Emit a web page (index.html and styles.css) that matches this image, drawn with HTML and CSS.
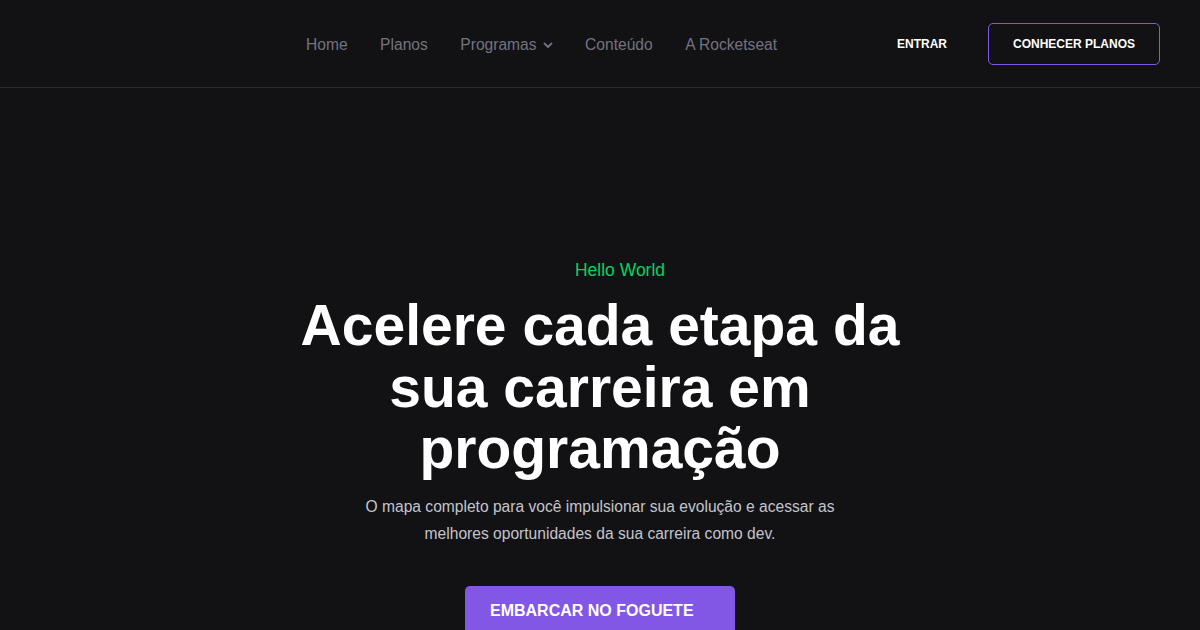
FILE: index.html
```html
<!DOCTYPE html>
<html lang="pt-BR">
<head>
<meta charset="utf-8">
<title>Rocketseat</title>
<link rel="stylesheet" href="styles.css">
</head>
<body>
<header class="header">
  <div class="header-inner">
    <div class="logo"></div>
    <nav class="nav">
      <a href="#">Home</a>
      <a href="#">Planos</a>
      <a href="#" class="dropdown">Programas
        <svg width="10" height="10" viewBox="0 0 10 10"><path d="M1.5 3.5 L5 7 L8.5 3.5" fill="none" stroke="currentColor" stroke-width="1.8" stroke-linecap="round" stroke-linejoin="round"/></svg>
      </a>
      <a href="#">Conteúdo</a>
      <a href="#">A Rocketseat</a>
    </nav>
    <div class="actions">
      <a href="#" class="enter">ENTRAR</a>
      <a href="#" class="btn-outline">CONHECER PLANOS</a>
    </div>
  </div>
</header>
<main class="hero">
  <span class="tag">Hello World</span>
  <h1 class="title">Acelere cada etapa da sua carreira em programação</h1>
  <p class="lead">O mapa completo para você impulsionar sua evolução e acessar as melhores oportunidades da sua carreira como dev.</p>
  <a href="#" class="btn-primary">EMBARCAR NO FOGUETE</a>
</main>
</body>
</html>
```
FILE: styles.css
```css
* { box-sizing: border-box; }
html, body { margin: 0; padding: 0; }
body {
  background: #121214;
  font-family: "Liberation Sans", Arial, sans-serif;
  color: #e1e1e6;
  overflow: hidden;
}
a { text-decoration: none; color: inherit; }
.header {
  border-bottom: 1px solid #29292e;
  height: 88px;
}
.header-inner {
  width: 1120px;
  margin: 0 auto;
  height: 87px;
  display: flex;
  align-items: center;
}
.logo { width: 266px; }
.nav {
  display: flex;
  align-items: center;
  gap: 32.5px;
  margin-top: 2px;
  font-size: 15.6px;
  color: #737380;
}
.dropdown { display: flex; align-items: center; gap: 6px; }
.dropdown svg { margin-top: 1px; }
.actions {
  margin-left: auto;
  display: flex;
  align-items: center;
  gap: 41px;
  font-size: 12px;
  font-weight: 700;
  color: #ffffff;
}
.enter { margin-top: 1px; }
.btn-outline {
  display: flex;
  align-items: center;
  height: 42px;
  padding: 0 24px;
  border: 1px solid #8257e5;
  border-radius: 5px;
}
.hero {
  display: flex;
  flex-direction: column;
  align-items: center;
  text-align: center;
  padding-top: 170px;
}
.tag {
  padding-left: 40px;
  color: #04d361;
  font-size: 17.5px;
  line-height: 24px;
}
.title {
  margin: 13px 0 0;
  width: 640px;
  font-size: 57px;
  line-height: 61.5px;
  font-weight: 700;
  color: #ffffff;
}
.lead {
  margin: 13px 0 0;
  width: 500px;
  font-size: 15.6px;
  line-height: 27px;
  color: #c4c4cc;
}
.btn-primary {
  margin-top: 39px;
  display: flex;
  align-items: center;
  width: 270px;
  height: 50px;
  padding: 0 25px;
  background: #8257e5;
  border-radius: 5px;
  font-size: 16px;
  font-weight: 700;
  color: #ffffff;
}
```
